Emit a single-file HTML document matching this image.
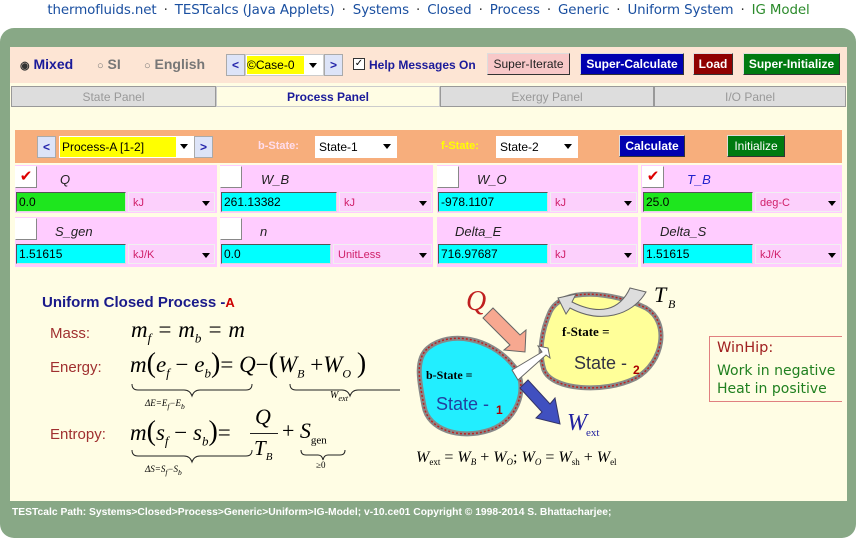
<!DOCTYPE html>
<html><head><meta charset="utf-8"><style>
*{margin:0;padding:0;box-sizing:border-box}
body{width:857px;height:538px;background:#fff;position:relative;overflow:hidden;font-family:"Liberation Sans",Arial,sans-serif}
.a{position:absolute}
.nav{top:3px;left:0;width:857px;text-align:center;font-family:"DejaVu Sans",sans-serif;font-size:13.4px;color:#1a4fa0;letter-spacing:-0.1px}
.nav span.d{margin:0 7px;color:#333}
.btn{position:absolute;font-size:12px;font-weight:bold;text-align:center;line-height:20px;height:22px;border:1px solid #555;border-color:#ddd #333 #333 #ddd}
.tab{position:absolute;top:86px;height:21px;font-size:12px;text-align:center;line-height:20px;color:#999;background:#ddd;border:1px solid #999}
.cell{position:absolute;background:#ffccff}
.val{position:absolute;height:20px;font-size:12px;line-height:18px;padding-left:2px;border:1px solid #555;border-color:#555 #ddd #ddd #555}
.unit{position:absolute;height:20px;font-size:11px;line-height:20px;color:#d0206a;padding-left:4px;background:#fcd0fc;border:1px solid #f0f0f0}
.unit::after{content:"";position:absolute;right:4px;top:8px;border:4px solid transparent;border-top:5px solid #000}
.chk{position:absolute;width:22px;height:22px;background:#fff;border:1px solid #999;border-color:#fff #888 #888 #fff;color:#d00;font-size:15px;line-height:20px;text-align:center}
.lbl{position:absolute;font-size:13px;font-style:italic;color:#222}
.sel::after{content:"";position:absolute;right:6px;top:8px;border:4px solid transparent;border-top:5px solid #000}
.ar{position:absolute;width:19px;height:22px;background:#dde4f8;border:1px solid #aaa;color:#22a;font-size:12px;text-align:center;line-height:20px;font-weight:bold}
.m{font-family:"Liberation Serif",serif;font-style:italic}
</style></head><body>
<div class="a nav">thermofluids.net<span class="d">·</span>TESTcalcs (Java Applets)<span class="d">·</span>Systems<span class="d">·</span>Closed<span class="d">·</span>Process<span class="d">·</span>Generic<span class="d">·</span>Uniform System<span class="d">·</span><span style="color:#2a8a2a">IG Model</span></div>
<div class="a" style="left:0;top:28px;width:856px;height:510px;background:#88a886;border-radius:14px"></div>
<div class="a" style="left:10px;top:47px;width:837px;height:454px;background:#fffde4"></div>
<div class="a" style="left:10px;top:47px;width:837px;height:36px;background:#fde5d4"></div>
<div class="a" style="left:20px;top:56px;font-size:14px;font-weight:bold;color:#1a1a9a"><span style="font-size:11px;color:#333">◉</span> Mixed</div>
<div class="a" style="left:97px;top:56px;font-size:14px;font-weight:bold;color:#777"><span style="font-size:11px">○</span> SI</div>
<div class="a" style="left:144px;top:56px;font-size:14px;font-weight:bold;color:#777"><span style="font-size:11px">○</span> English</div>
<div class="ar" style="left:226px;top:54px">&lt;</div>
<div class="a sel" style="left:245px;top:54px;width:79px;height:22px;background:#fff;border:1px solid #ccc"><div style="background:#ff0;width:57px;height:18px;margin:1px;font-size:12px;line-height:18px">©Case-0</div></div>
<div class="ar" style="left:324px;top:54px">&gt;</div>
<div class="a" style="left:353px;top:58px;width:12px;height:12px;border:1px solid #333;background:#fff;font-size:10px;line-height:10px;text-align:center">✓</div>
<div class="a" style="left:369px;top:58px;font-size:12px;font-weight:bold;color:#1a1a9a">Help Messages On</div>
<div class="btn" style="left:487px;top:53px;width:83px;background:#f8c8c8;color:#222;font-weight:normal">Super-Iterate</div>
<div class="btn" style="left:580px;top:53px;width:104px;background:#0000b0;color:#fff">Super-Calculate</div>
<div class="btn" style="left:693px;top:53px;width:40px;background:#900000;color:#fff">Load</div>
<div class="btn" style="left:743px;top:53px;width:97px;background:#007a10;color:#fff">Super-Initialize</div>
<div class="tab" style="left:11px;width:205px">State Panel</div>
<div class="tab" style="left:216px;width:224px;background:#fffde4;color:#1a1a9a;font-weight:bold;border-color:#ccc">Process Panel</div>
<div class="tab" style="left:440px;width:214px">Exergy Panel</div>
<div class="tab" style="left:654px;width:192px">I/O Panel</div>
<div class="a" style="left:15px;top:130px;width:827px;height:33px;background:#f7ae7c"></div>
<div class="ar" style="left:37px;top:136px">&lt;</div>
<div class="a sel" style="left:59px;top:136px;width:135px;height:22px;background:#fff"><div style="background:#ff0;width:116px;height:20px;margin:1px;font-size:12px;line-height:20px;padding-left:2px">Process-A [1-2]</div></div>
<div class="ar" style="left:194px;top:136px">&gt;</div>
<div class="a" style="left:258px;top:140px;font-size:11px;font-weight:bold;color:#fde">b-State:</div>
<div class="a sel" style="left:315px;top:136px;width:82px;height:22px;background:#fff;font-size:12px;line-height:22px;padding-left:4px">State-1</div>
<div class="a" style="left:441px;top:140px;font-size:11px;font-weight:bold;color:#ff0">f-State:</div>
<div class="a sel" style="left:496px;top:136px;width:82px;height:22px;background:#fff;font-size:12px;line-height:22px;padding-left:4px">State-2</div>
<div class="btn" style="left:619px;top:135px;width:66px;background:#0000b0;color:#fff">Calculate</div>
<div class="btn" style="left:727px;top:135px;width:58px;background:#007a10;color:#fff;font-weight:normal">Initialize</div>

<div class="cell" style="left:15px;top:165px;width:202px;height:48px"></div>
<div class="cell" style="left:220px;top:165px;width:213px;height:48px"></div>
<div class="cell" style="left:437px;top:165px;width:201px;height:48px"></div>
<div class="cell" style="left:641px;top:165px;width:201px;height:48px"></div>
<div class="cell" style="left:15px;top:217px;width:202px;height:50px"></div>
<div class="cell" style="left:220px;top:217px;width:213px;height:50px"></div>
<div class="cell" style="left:437px;top:217px;width:201px;height:50px"></div>
<div class="cell" style="left:641px;top:217px;width:201px;height:50px"></div>

<div class="chk" style="left:15px;top:166px">✔</div><div class="lbl" style="left:60px;top:172px">Q</div>
<div class="chk" style="left:220px;top:166px"></div><div class="lbl" style="left:261px;top:172px">W_B</div>
<div class="chk" style="left:437px;top:166px"></div><div class="lbl" style="left:477px;top:172px">W_O</div>
<div class="chk" style="left:642px;top:166px">✔</div><div class="lbl" style="left:687px;top:172px;color:#22c">T_B</div>
<div class="val" style="left:16px;top:192px;width:110px;background:#1ee61e">0.0</div><div class="unit" style="left:128px;top:192px;width:87px">kJ</div>
<div class="val" style="left:221px;top:192px;width:116px;background:#0ff">261.13382</div><div class="unit" style="left:339px;top:192px;width:93px">kJ</div>
<div class="val" style="left:438px;top:192px;width:110px;background:#0ff">-978.1107</div><div class="unit" style="left:550px;top:192px;width:87px">kJ</div>
<div class="val" style="left:643px;top:192px;width:110px;background:#1ee61e">25.0</div><div class="unit" style="left:755px;top:192px;width:86px">deg-C</div>

<div class="chk" style="left:15px;top:218px"></div><div class="lbl" style="left:55px;top:224px">S_gen</div>
<div class="chk" style="left:220px;top:218px"></div><div class="lbl" style="left:260px;top:224px">n</div>
<div class="lbl" style="left:455px;top:224px">Delta_E</div>
<div class="lbl" style="left:660px;top:224px">Delta_S</div>
<div class="val" style="left:16px;top:244px;width:110px;background:#0ff">1.51615</div><div class="unit" style="left:128px;top:244px;width:87px">kJ/K</div>
<div class="val" style="left:221px;top:244px;width:110px;background:#0ff">0.0</div><div class="unit" style="left:333px;top:244px;width:99px">UnitLess</div>
<div class="val" style="left:438px;top:244px;width:110px;background:#0ff">716.97687</div><div class="unit" style="left:550px;top:244px;width:87px">kJ</div>
<div class="val" style="left:643px;top:244px;width:110px;background:#0ff">1.51615</div><div class="unit" style="left:755px;top:244px;width:86px">kJ/K</div>

<div class="a" style="left:42px;top:294px;font-size:15px;font-weight:bold;color:#1a1a8a">Uniform Closed Process -<span style="color:#c00;font-size:13px">A</span></div>
<div class="a" style="left:50px;top:325px;font-size:15px;color:#a03030">Mass:</div>
<div class="a" style="left:50px;top:359px;font-size:15px;color:#a03030">Energy:</div>
<div class="a" style="left:50px;top:426px;font-size:15px;color:#a03030">Entropy:</div>
<div class="a m" style="left:131px;top:317px;font-size:23px">m<sub style="font-size:13px">f</sub> = m<sub style="font-size:13px">b</sub> = m</div>
<div class="a m" style="left:130px;top:348px;font-size:23px;white-space:nowrap">m<span style="font-style:normal;font-size:28px">(</span>e<sub style="font-size:13px">f</sub> <span style="font-style:normal">−</span> e<sub style="font-size:13px">b</sub><span style="font-style:normal;font-size:28px">)</span><span style="font-style:normal">=</span> Q<span style="font-style:normal">−</span><span style="font-style:normal;font-size:28px">(</span>W<sub style="font-size:12px">B</sub> <span style="font-style:normal">+</span>W<sub style="font-size:12px">O</sub> <span style="font-style:normal;font-size:28px">)</span></div>
<svg class="a" style="left:130px;top:384px" width="270" height="30"><path d="M2 0 q0 6 6 6 h46 q6 0 8 6 q2 -6 8 -6 h46 q6 0 6 -6 M160 0 q0 6 6 6 h46 q6 0 8 6 q2 -6 8 -6 h46 q6 0 6 -6" fill="none" stroke="#222" stroke-width="1"/></svg>
<div class="a m" style="left:145px;top:398px;font-size:9px">ΔE=E<sub>f</sub>−E<sub>b</sub></div>
<div class="a m" style="left:330px;top:390px;font-size:10px">W<sub>ext</sub></div>
<div class="a m" style="left:130px;top:416px;font-size:23px;white-space:nowrap">m<span style="font-style:normal;font-size:28px">(</span>s<sub style="font-size:13px">f</sub> <span style="font-style:normal">−</span> s<sub style="font-size:13px">b</sub><span style="font-style:normal;font-size:28px">)</span><span style="font-style:normal">=</span></div>
<div class="a m" style="left:255px;top:404px;font-size:22px">Q</div>
<div class="a" style="left:250px;top:433px;width:28px;border-top:1px solid #222"></div>
<div class="a m" style="left:254px;top:436px;font-size:21px">T<sub style="font-size:11px">B</sub></div>
<div class="a m" style="left:282px;top:418px;font-size:22px"><span style="font-style:normal">+</span> S<sub style="font-size:11px;font-style:normal">gen</sub></div>
<svg class="a" style="left:130px;top:450px" width="220" height="20"><path d="M2 0 q0 6 6 6 h46 q6 0 8 6 q2 -6 8 -6 h46 q6 0 6 -6 M171 0 q0 5 5 5 h12 q4 0 5 5 q1 -5 5 -5 h12 q5 0 5 -5" fill="none" stroke="#222"/></svg>
<div class="a m" style="left:145px;top:464px;font-size:9px">ΔS=S<sub>f</sub>−S<sub>b</sub></div>
<div class="a" style="left:316px;top:460px;font-size:9px;font-family:'Liberation Serif',serif">≥0</div>

<svg class="a" style="left:400px;top:280px" width="300" height="200">
<path d="M150 32 C162 6 214 12 246 28 C270 42 264 82 236 98 C204 114 152 110 144 90 C138 72 142 50 150 32Z" fill="#ffff99" stroke="#888" stroke-width="5"/>
<path d="M150 32 C162 6 214 12 246 28 C270 42 264 82 236 98 C204 114 152 110 144 90 C138 72 142 50 150 32Z" fill="none" stroke="#b22" stroke-width="1.5" stroke-dasharray="2 2"/>
<path d="M28 68 C50 50 90 58 112 84 C130 102 120 140 90 150 C60 160 28 150 24 126 C20 104 14 80 28 68Z" fill="#22eeff" stroke="#888" stroke-width="5"/>
<path d="M28 68 C50 50 90 58 112 84 C130 102 120 140 90 150 C60 160 28 150 24 126 C20 104 14 80 28 68Z" fill="none" stroke="#b22" stroke-width="1.5" stroke-dasharray="2 2"/>
<path d="M93 28 L120 55 L126 50 L125 72 L104 70 L110 65 L83 38Z" fill="#f7a890" stroke="#666"/>
<path d="M112 90 L142 72 L138 66 L148 68 L150 78 L146 75 L118 100Z" fill="#fff" stroke="#666"/>
<path d="M128 100 L150 124 L155 118 L160 144 L136 138 L142 132 L120 108Z" fill="#4050c0" stroke="#336"/>
<path d="M230 8 C220 30 200 36 172 22 L176 14 L158 18 L166 34 L170 28 C200 44 232 36 246 12Z" fill="#ddd" stroke="#666"/>
<text x="66" y="30" font-family="Liberation Serif" font-style="italic" font-size="28" fill="#c02020">Q</text>
<text x="254" y="22" font-family="Liberation Serif" font-style="italic" font-size="22">T</text><text x="268" y="28" font-family="Liberation Serif" font-style="italic" font-size="12">B</text>
<text x="162" y="56" font-family="Liberation Serif" font-weight="bold" font-size="13">f-State =</text>
<text x="174" y="89" font-family="Liberation Sans" font-size="18" fill="#334">State -</text><text x="233" y="94" font-family="Liberation Sans" font-weight="bold" font-size="12" fill="#a00">2</text>
<text x="26" y="99" font-family="Liberation Serif" font-weight="bold" font-size="12">b-State =</text>
<text x="36" y="130" font-family="Liberation Sans" font-size="18" fill="#2240a0">State -</text><text x="96" y="134" font-family="Liberation Sans" font-weight="bold" font-size="12" fill="#a00">1</text>
<text x="167" y="150" font-family="Liberation Serif" font-style="italic" font-size="24" fill="#2222a0">W</text><text x="186" y="156" font-family="Liberation Serif" font-size="11" fill="#2222a0">ext</text>
<text x="16" y="182" font-family="Liberation Serif" font-style="italic" font-size="16">W<tspan font-size="9" font-style="normal" dy="3">ext</tspan><tspan dy="-3" font-style="normal"> = </tspan>W<tspan font-size="9" dy="3">B</tspan><tspan dy="-3" font-style="normal"> + </tspan>W<tspan font-size="9" dy="3">O</tspan><tspan dy="-3" font-style="normal">;    </tspan>W<tspan font-size="9" dy="3">O</tspan><tspan dy="-3" font-style="normal"> = </tspan>W<tspan font-size="9" font-style="normal" dy="3">sh</tspan><tspan dy="-3" font-style="normal"> + </tspan>W<tspan font-size="9" font-style="normal" dy="3">el</tspan></text>
</svg>
<div class="a" style="left:709px;top:336px;width:133px;height:66px;border:1px solid #e08080;border-right:none;background:#fffde4"></div>
<div class="a" style="left:717px;top:340px;font-family:'DejaVu Sans',sans-serif;font-size:14.5px;color:#a02020">WinHip:</div>
<div class="a" style="left:717px;top:362px;font-family:'DejaVu Sans',sans-serif;font-size:14px;color:#208020;line-height:18px;white-space:nowrap">Work in negative<br>Heat in positive</div>
<div class="a" style="left:12px;top:507px;font-size:10.3px;font-weight:bold;color:#fff;white-space:nowrap">TESTcalc Path: Systems&gt;Closed&gt;Process&gt;Generic&gt;Uniform&gt;IG-Model; v-10.ce01 Copyright © 1998-2014 S. Bhattacharjee;</div>
</body></html>
